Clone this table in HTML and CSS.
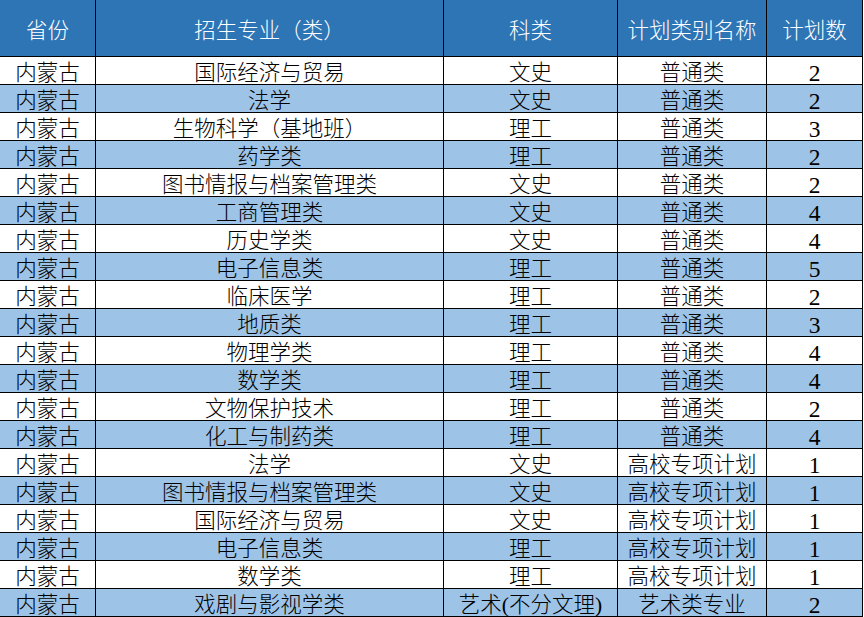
FILE: index.html
```html
<!DOCTYPE html>
<html lang="zh-CN">
<head>
<meta charset="utf-8">
<title>招生计划</title>
<link rel="stylesheet" href="styles.css">
</head>
<body>
<div class="table">
  <div class="cell head">省份</div>
  <div class="cell head">招生专业（类）</div>
  <div class="cell head">科类</div>
  <div class="cell head">计划类别名称</div>
  <div class="cell head">计划数</div>

  <div class="cell">内蒙古</div><div class="cell">国际经济与贸易</div><div class="cell">文史</div><div class="cell">普通类</div><div class="cell num">2</div>
  <div class="cell alt">内蒙古</div><div class="cell alt">法学</div><div class="cell alt">文史</div><div class="cell alt">普通类</div><div class="cell alt num">2</div>
  <div class="cell">内蒙古</div><div class="cell">生物科学（基地班）</div><div class="cell">理工</div><div class="cell">普通类</div><div class="cell num">3</div>
  <div class="cell alt">内蒙古</div><div class="cell alt">药学类</div><div class="cell alt">理工</div><div class="cell alt">普通类</div><div class="cell alt num">2</div>
  <div class="cell">内蒙古</div><div class="cell">图书情报与档案管理类</div><div class="cell">文史</div><div class="cell">普通类</div><div class="cell num">2</div>
  <div class="cell alt">内蒙古</div><div class="cell alt">工商管理类</div><div class="cell alt">文史</div><div class="cell alt">普通类</div><div class="cell alt num">4</div>
  <div class="cell">内蒙古</div><div class="cell">历史学类</div><div class="cell">文史</div><div class="cell">普通类</div><div class="cell num">4</div>
  <div class="cell alt">内蒙古</div><div class="cell alt">电子信息类</div><div class="cell alt">理工</div><div class="cell alt">普通类</div><div class="cell alt num">5</div>
  <div class="cell">内蒙古</div><div class="cell">临床医学</div><div class="cell">理工</div><div class="cell">普通类</div><div class="cell num">2</div>
  <div class="cell alt">内蒙古</div><div class="cell alt">地质类</div><div class="cell alt">理工</div><div class="cell alt">普通类</div><div class="cell alt num">3</div>
  <div class="cell">内蒙古</div><div class="cell">物理学类</div><div class="cell">理工</div><div class="cell">普通类</div><div class="cell num">4</div>
  <div class="cell alt">内蒙古</div><div class="cell alt">数学类</div><div class="cell alt">理工</div><div class="cell alt">普通类</div><div class="cell alt num">4</div>
  <div class="cell">内蒙古</div><div class="cell">文物保护技术</div><div class="cell">理工</div><div class="cell">普通类</div><div class="cell num">2</div>
  <div class="cell alt">内蒙古</div><div class="cell alt">化工与制药类</div><div class="cell alt">理工</div><div class="cell alt">普通类</div><div class="cell alt num">4</div>
  <div class="cell">内蒙古</div><div class="cell">法学</div><div class="cell">文史</div><div class="cell">高校专项计划</div><div class="cell num">1</div>
  <div class="cell alt">内蒙古</div><div class="cell alt">图书情报与档案管理类</div><div class="cell alt">文史</div><div class="cell alt">高校专项计划</div><div class="cell alt num">1</div>
  <div class="cell">内蒙古</div><div class="cell">国际经济与贸易</div><div class="cell">文史</div><div class="cell">高校专项计划</div><div class="cell num">1</div>
  <div class="cell alt">内蒙古</div><div class="cell alt">电子信息类</div><div class="cell alt">理工</div><div class="cell alt">高校专项计划</div><div class="cell alt num">1</div>
  <div class="cell">内蒙古</div><div class="cell">数学类</div><div class="cell">理工</div><div class="cell">高校专项计划</div><div class="cell num">1</div>
  <div class="cell alt">内蒙古</div><div class="cell alt">戏剧与影视学类</div><div class="cell alt">艺术(不分文理)</div><div class="cell alt">艺术类专业</div><div class="cell alt num">2</div>
</div>
</body>
</html>
```

FILE: styles.css
```css
html, body {
  margin: 0;
  padding: 0;
  background: #ffffff;
}

.table {
  display: grid;
  grid-template-columns: 96px 348px 174px 149px 96px;
  grid-template-rows: 57px;
  grid-auto-rows: 28px;
  width: 863px;
  font-family: "Liberation Serif", "Noto Sans CJK SC", serif;
  font-size: 21.5px;
  font-weight: 300;
  color: #000;
}

.cell {
  box-sizing: border-box;
  border-right: 1px solid #000;
  border-bottom: 1px solid #000;
  display: flex;
  align-items: center;
  justify-content: center;
  padding-top: 4px;
  line-height: 24px;
  white-space: nowrap;
  background: #ffffff;
}

.cell.alt {
  background: #9dc3e6;
}

.cell.head {
  background: #2e75b6;
  color: #ffffff;
  padding-top: 5px;
}

.cell.num {
  font-size: 23.5px;
  font-weight: 400;
}
```
